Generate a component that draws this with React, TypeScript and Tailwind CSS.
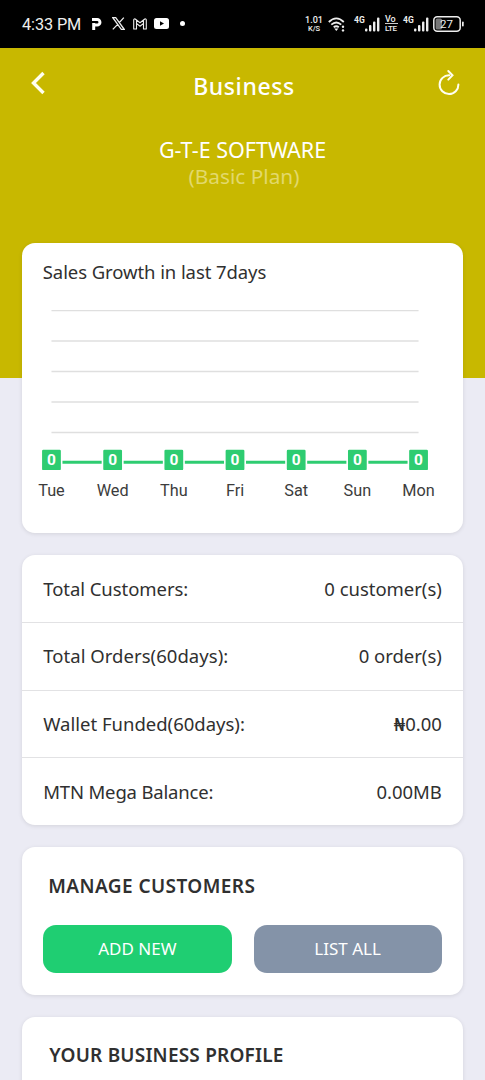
import React from 'react';

interface Stat {
  label: string;
  labelClass: string;
  value: string;
  currency?: string;
}

interface SalesPoint {
  day: string;
  total: number;
}

const sales: SalesPoint[] = [
  { day: 'Tue', total: 0 },
  { day: 'Wed', total: 0 },
  { day: 'Thu', total: 0 },
  { day: 'Fri', total: 0 },
  { day: 'Sat', total: 0 },
  { day: 'Sun', total: 0 },
  { day: 'Mon', total: 0 },
];

const stats: Stat[] = [
  { label: 'Total Customers:', labelClass: 'tracking-[-0.06px]', value: '0 customer(s)' },
  { label: 'Total Orders(60days):', labelClass: 'tracking-[0.04px]', value: '0 order(s)' },
  { label: 'Wallet Funded(60days):', labelClass: 'tracking-normal', value: '0.00', currency: '₦' },
  { label: 'MTN Mega Balance:', labelClass: 'tracking-[-0.17px]', value: '0.00MB' },
];

const Signal: React.FC = () => (
  <svg width="15" height="15" viewBox="0 0 15 15" fill="#eee">
    <rect x="0" y="11.5" width="2.4" height="3" rx="1" />
    <rect x="4" y="8" width="2.4" height="6.5" rx="1" />
    <rect x="8" y="4.5" width="2.4" height="10" rx="1" />
    <rect x="12" y="0.5" width="2.4" height="14" rx="1" />
  </svg>
);

const StatusBar: React.FC = () => (
  <div className="h-12 bg-black flex items-center justify-between pl-[22px] pr-[21px] font-['Roboto',sans-serif] text-[#eee]">
    <div className="flex items-center">
      <span className="text-[16.3px] leading-none w-[70px] whitespace-nowrap tracking-[-0.1px] pt-0.5">4:33 PM</span>
      <svg className="mr-[10px]" width="10" height="12" viewBox="0 0 10 12" fill="none" stroke="#fff" strokeWidth="3">
        <path d="M0 1.5H5.2a2.6 2.6 0 0 1 0 5.5H1.7M1.7 5V12" />
      </svg>
      <svg className="mr-[8px]" width="13" height="13" viewBox="0 0 13 13" fill="none" stroke="#eee" strokeWidth="1.3">
        <path d="M.8.7H3.7L12.2 12.3H9.3ZM11.8.6 7.3 5.6M5.7 7.4.8 12.4" />
      </svg>
      <svg className="mr-[7px]" width="14" height="12" viewBox="0 0 14 12" fill="none" stroke="#eee" strokeWidth="1.1" strokeLinejoin="round">
        <path d="M.7 2.2Q.7.6 2.2 1L7 4.8 11.8 1Q13.3.6 13.3 2.2V11H10.5V5.4L7 8.2 3.5 5.4V11H.7ZM3.5 2.2V5.4M10.5 2.2V5.4" />
      </svg>
      <svg className="mr-[11px]" width="15" height="11" viewBox="0 0 15 11">
        <rect width="15" height="11" rx="2.5" fill="#fff" />
        <path d="M6 3.2 10 5.5 6 7.8Z" fill="#000" />
      </svg>
      <span className="w-[5px] h-[5px] rounded-full bg-white"></span>
    </div>

    <div className="flex items-center">
      <div className="w-[18px] font-medium leading-[9px] text-center mr-[5px]">
        <div className="text-[9px] leading-[9px]">1.01</div>
        <div className="text-[7.5px] leading-[8px]">K/S</div>
      </div>
      <svg className="mr-[8px]" width="18" height="15" viewBox="0 0 18 15" fill="none" stroke="#eee" strokeWidth="1.8">
        <path d="M.8 5Q8.3 -2.2 15.8 5M3.3 7.7Q8.3 3.2 13.2 7.7M5.7 10.3Q8.3 8.3 10.8 10.3" />
        <path d="M6.3 11.6H10.4L8.3 14Z" fill="#eee" stroke="none" />
        <circle cx="15" cy="9.7" r="1.2" fill="#eee" stroke="none" />
        <circle cx="15" cy="13.4" r="1.2" fill="#eee" stroke="none" />
      </svg>
      <span className="text-[8.5px] font-bold leading-none self-start w-[11px] mt-px">4G</span>
      <Signal />
      <div className="w-[14px] font-medium ml-[5px] mr-[4px]">
        <div className="border-b border-[#ccc] text-[9px] leading-[8px] w-[13px]">Vo</div>
        <div className="text-[8px] leading-[9px] tracking-[-0.3px]">LTE</div>
      </div>
      <span className="text-[8.5px] font-bold leading-none self-start w-[11px] mt-px">4G</span>
      <Signal />
      <svg className="ml-[4px]" width="31" height="16" viewBox="0 0 31 16">
        <rect x=".8" y=".8" width="26.4" height="14.4" rx="3.5" fill="none" stroke="#eee" strokeWidth="1.5" />
        <rect x="2.6" y="2.6" width="6.4" height="10.8" rx="1.5" fill="#777" />
        <rect x="29" y="5.5" width="1.7" height="5" rx=".8" fill="#eee" />
        <text x="13.5" y="12" textAnchor="middle" fill="#eee" fontSize="11.5">27</text>
      </svg>
    </div>
  </div>
);

const SalesChart: React.FC = () => {
  const step = 61.25;
  const left = 29.5;

  return (
    <svg className="block w-full" height="220" viewBox="0 0 442 220" fontFamily="Roboto, sans-serif">
      {/* Grid */}
      {[0, 1, 2, 3, 4].map((n) => (
        <line key={n} x1={left} x2={left + step * 6} y1={17.5 + n * 30.5} y2={17.5 + n * 30.5} stroke="#dfdfdf" strokeWidth="1.4" />
      ))}

      {/* Series */}
      <line x1={left} x2={left + step * 6} y1="169.4" y2="169.4" stroke="#2ecc71" strokeWidth="3" />
      {sales.map((point, i) => (
        <g key={point.day} textAnchor="middle">
          <rect x={left + step * i - 10.2} y="156" width="20.4" height="22" rx="2" fill="#2ecc71" stroke="#fff" strokeWidth="1.6" />
          <text x={left + step * i} y="172.4" fill="#fff" fontSize="15.5" fontWeight="700">{point.total}</text>
          <text x={left + step * i} y="203.5" fill="#3c3c3c" fontSize="16.3">{point.day}</text>
        </g>
      ))}
    </svg>
  );
};

const App: React.FC = () => {
  return (
    <div className="w-[485px] h-[1080px] overflow-hidden bg-[#ebebf4] font-['Noto_Sans',sans-serif] text-[#303030]">
      <StatusBar />

      <header className="h-[330px] bg-[#c8b800] text-white">
        <div className="h-[76px] flex items-center justify-between px-[22px]">
          <button className="w-8 h-8 flex items-center justify-center">
            <svg className="-mt-1.5" width="16" height="24" viewBox="0 0 16 24" fill="none" stroke="#fffff0" strokeWidth="3.4">
              <path d="M13.5 2 3.5 12l10 10" />
            </svg>
          </button>
          <h1 className="text-[23px] font-medium leading-none tracking-[0.6px] pl-[3px]">Business</h1>
          <button className="w-8 h-8 flex items-center justify-center">
            <svg className="-mt-1.5 -mr-1" width="24" height="28" viewBox="0 0 24 28" fill="none" stroke="#fffff0" strokeWidth="2">
              <path d="M12.3 6.3A9.4 9.4 0 1 0 21.4 15.5" strokeLinecap="round" />
              <path d="M11.3 2 15.5 6.3 11.3 10.6" strokeLinecap="round" />
            </svg>
          </button>
        </div>
        <div className="pt-[13px] text-center leading-[26px]">
          <p className="text-[21.5px]">G-T-E SOFTWARE</p>
          <p className="text-[20.8px] pl-[3px] text-[#e2d96c]">(Basic Plan)</p>
        </div>
      </header>

      <main className="-mt-[135px] px-[21.75px] flex flex-col gap-[22px]">
        <section className="h-[290px] bg-white rounded-[13px] shadow-[0_1px_4px_rgba(0,0,0,0.1)]">
          <h2 className="h-[50px] pt-[16px] pl-[21px] text-[18.5px] leading-[26px] tracking-[-0.08px]">Sales Growth in last 7days</h2>
          <SalesChart />
        </section>

        <section className="h-[270px] bg-white rounded-[13px] shadow-[0_1px_4px_rgba(0,0,0,0.1)] flex flex-col divide-y divide-[#e2e2e4]">
          {stats.map((stat) => (
            <div key={stat.label} className="flex-1 px-[21.5px] flex items-center justify-between text-[18.5px]">
              <span className={stat.labelClass}>{stat.label}</span>
              <span className="tracking-[-0.03px]">
                {stat.currency && <span className="font-['DejaVu_Sans',sans-serif] text-[18px] leading-none">{stat.currency}</span>}
                {stat.value}
              </span>
            </div>
          ))}
        </section>

        <section className="h-[148px] bg-white rounded-[13px] shadow-[0_1px_4px_rgba(0,0,0,0.1)] px-[21.5px]">
          <h2 className="h-[78px] pt-[25px] pl-[5px] text-[19px] font-semibold leading-[28px] tracking-[0.42px]">MANAGE CUSTOMERS</h2>
          <div className="grid grid-cols-2 gap-[22px]">
            <button className="h-[48px] rounded-[13px] bg-[#1fce72] text-white text-[17px]">ADD NEW</button>
            <button className="h-[48px] rounded-[13px] bg-[#8493a8] text-white text-[17px]">LIST ALL</button>
          </div>
        </section>

        <section className="h-[148px] bg-white rounded-[13px] shadow-[0_1px_4px_rgba(0,0,0,0.1)] px-[21.5px]">
          <h2 className="pt-[24px] pl-[6px] text-[19px] font-semibold leading-[28px] tracking-[0.2px]">YOUR BUSINESS PROFILE</h2>
        </section>
      </main>
    </div>
  );
};

export default App;
